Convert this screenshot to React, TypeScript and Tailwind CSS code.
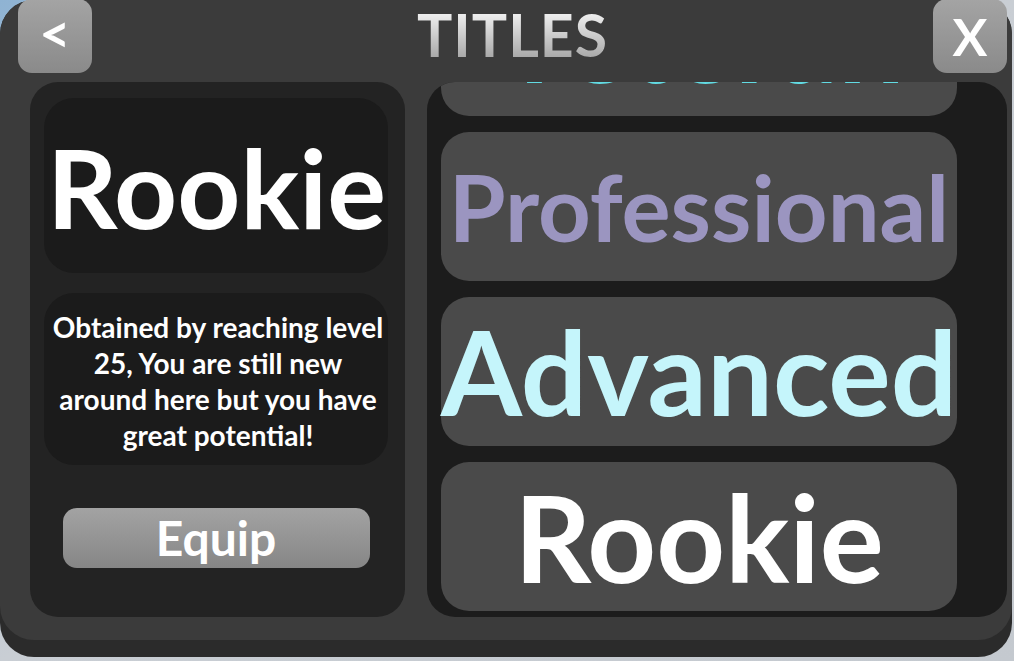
import React from "react";

type Title = {
  name: string;
  color: string;
  size: string;
  nudge?: string;
};

const TITLES: Title[] = [
  { name: "Veteran", color: "text-[#62dbe3]", size: "text-[118px]", nudge: "pb-[7px]" },
  { name: "Professional", color: "text-[#9b95c0]", size: "text-[92px]" },
  { name: "Advanced", color: "text-[#c5f5fb]", size: "text-[117px]" },
  { name: "Rookie", color: "text-white", size: "text-[120px]" },
];

const DESCRIPTION = [
  "Obtained by reaching level",
  "25, You are still new",
  "around here but you have",
  "great potential!",
];

function SquareButton({ label, size }: { label: string; size: string }) {
  return (
    <button
      type="button"
      className={`-mt-px flex h-[74px] w-[74px] items-center justify-center rounded-[14px] bg-gradient-to-b from-[#a4a4a4] to-[#8a8a8a] ${size} font-bold leading-none text-white`}
    >
      {label}
    </button>
  );
}

export default function App() {
  return (
    <div className="h-screen w-full overflow-hidden bg-gradient-to-br from-[#8fb3d3] via-[#c9ced4] to-[#c4c9cf] font-['Lato','Open_Sans',sans-serif]">
      <div className="h-[657px] w-[1012px] rounded-[34px] bg-[#2b2b2b] pb-[17px]">
        <div className="flex h-full flex-col rounded-[34px] bg-[#3b3b3b]">
          <header className="flex h-[82px] items-start justify-between pl-[18px] pr-[5px]">
            <SquareButton label="<" size="text-[54px] pb-[6px]" />
            <h1 className="mt-[4px] bg-gradient-to-b from-white to-[#9c9c9c] bg-clip-text text-[59px] font-bold leading-[62px] tracking-[1px] text-transparent">
              TITLES
            </h1>
            <SquareButton label="X" size="text-[52px]" />
          </header>

          <main className="flex h-[535px] gap-[22px] pl-[30px] pr-[5px]">
            <section className="flex w-[375px] flex-col rounded-[28px] bg-[#232323] pt-[16px] pl-[14px] pr-[17px]">
              <div className="flex h-[175px] items-center justify-center rounded-[30px] bg-[#1b1b1b] pl-px">
                <span className="text-[110px] font-bold leading-none text-white">Rookie</span>
              </div>
              <div className="mt-[20px] flex h-[172px] flex-col items-center justify-center rounded-[30px] bg-[#1b1b1b] pt-[4px] pl-[4px]">
                {DESCRIPTION.map((line) => (
                  <p
                    key={line}
                    className="whitespace-nowrap text-center text-[28px] font-bold leading-[36px] text-white"
                  >
                    {line}
                  </p>
                ))}
              </div>
              <button
                type="button"
                className="mx-auto mt-[43px] flex h-[60px] w-[307px] items-center justify-center rounded-[14px] bg-gradient-to-b from-[#a3a3a3] to-[#868686] text-[48px] font-bold leading-none text-white"
              >
                Equip
              </button>
            </section>

            <section className="flex-1 overflow-hidden rounded-[28px] bg-[#1c1c1c]">
              <ul className="-mt-[115px] flex w-[530px] flex-col gap-[16px] pl-[14px]">
                {TITLES.map((title) => (
                  <li
                    key={title.name}
                    className={`flex h-[149px] items-center justify-center rounded-[28px] bg-[#4a4a4a] ${title.nudge ?? ""}`}
                  >
                    <span className={`${title.size} ${title.color} font-bold leading-none`}>
                      {title.name}
                    </span>
                  </li>
                ))}
              </ul>
            </section>
          </main>
        </div>
      </div>
    </div>
  );
}
